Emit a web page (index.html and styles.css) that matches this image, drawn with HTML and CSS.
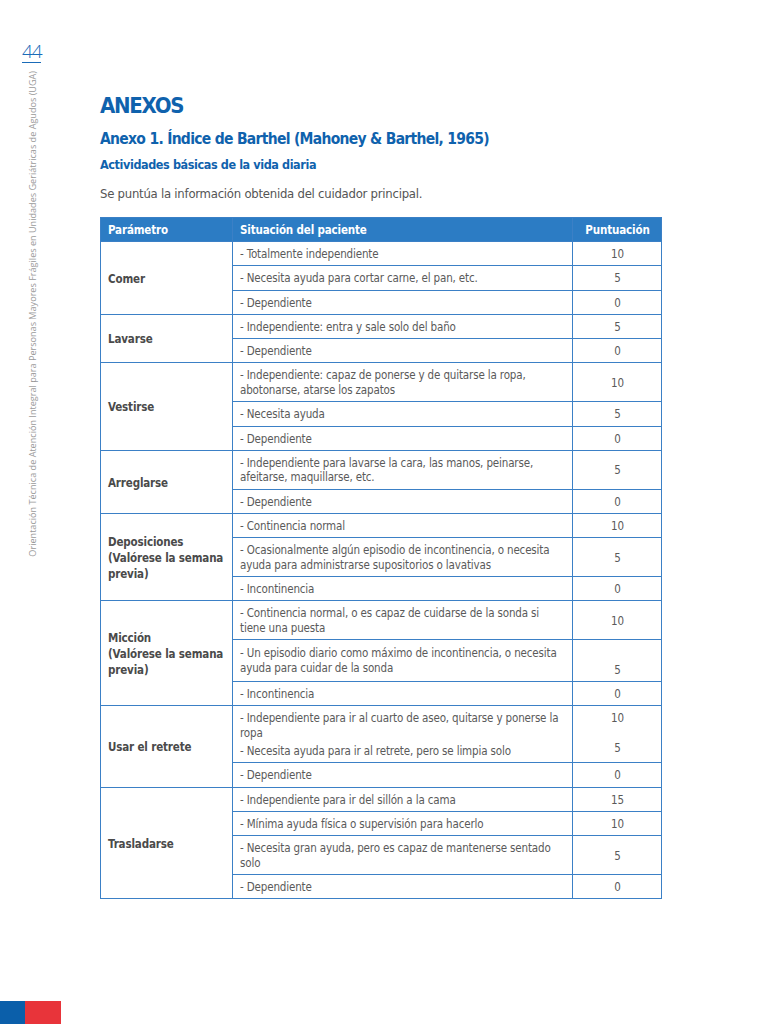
FILE: index.html
```html
<!DOCTYPE html>
<html lang="es">
<head>
<meta charset="utf-8">
<title>Anexos</title>
<link rel="stylesheet" href="styles.css">
</head>
<body>
<div class="page">
  <aside class="side">
    <div class="pagenum">44</div>
    <div class="vtext">Orientación Técnica de Atención Integral para Personas Mayores Frágiles en Unidades Geriátricas de Agudos (UGA)</div>
  </aside>
  <main class="content">
    <h1 class="h1">ANEXOS</h1>
    <h2 class="h2">Anexo 1. Índice de Barthel (Mahoney &amp; Barthel, 1965)</h2>
    <h3 class="h3">Actividades básicas de la vida diaria</h3>
    <p class="intro">Se puntúa la información obtenida del cuidador principal.</p>
    <table class="tbl">
      <colgroup><col class="c1"><col class="c2"><col class="c3"></colgroup>
      <thead>
        <tr><th>Parámetro</th><th>Situación del paciente</th><th class="num">Puntuación</th></tr>
      </thead>
      <tbody>
        <tr><td class="param" rowspan="3">Comer</td><td>- Totalmente independiente</td><td class="num">10</td></tr>
        <tr><td>- Necesita ayuda para cortar carne, el pan, etc.</td><td class="num">5</td></tr>
        <tr><td>- Dependiente</td><td class="num">0</td></tr>

        <tr><td class="param" rowspan="2">Lavarse</td><td>- Independiente: entra y sale solo del baño</td><td class="num">5</td></tr>
        <tr><td>- Dependiente</td><td class="num">0</td></tr>

        <tr><td class="param" rowspan="3">Vestirse</td><td>- Independiente: capaz de ponerse y de quitarse la ropa, abotonarse, atarse los zapatos</td><td class="num">10</td></tr>
        <tr><td>- Necesita ayuda</td><td class="num">5</td></tr>
        <tr><td>- Dependiente</td><td class="num">0</td></tr>

        <tr><td class="param" rowspan="2">Arreglarse</td><td>- Independiente para lavarse la cara, las manos, peinarse, afeitarse, maquillarse, etc.</td><td class="num">5</td></tr>
        <tr><td>- Dependiente</td><td class="num">0</td></tr>

        <tr><td class="param" rowspan="3">Deposiciones<br>(Valórese la semana previa)</td><td>- Continencia normal</td><td class="num">10</td></tr>
        <tr><td>- Ocasionalmente algún episodio de incontinencia, o necesita ayuda para administrarse supositorios o lavativas</td><td class="num">5</td></tr>
        <tr><td>- Incontinencia</td><td class="num">0</td></tr>

        <tr><td class="param" rowspan="3">Micción<br>(Valórese la semana previa)</td><td>- Continencia normal, o es capaz de cuidarse de la sonda si tiene una puesta</td><td class="num">10</td></tr>
        <tr><td class="top tall">- Un episodio diario como máximo de incontinencia, o necesita ayuda para cuidar de la sonda</td><td class="num bottom">5</td></tr>
        <tr><td>- Incontinencia</td><td class="num">0</td></tr>

        <tr><td class="param" rowspan="2">Usar el retrete</td>
          <td class="multi"><div class="item">- Independiente para ir al cuarto de aseo, quitarse y ponerse la ropa</div><div class="item">- Necesita ayuda para ir al retrete, pero se limpia solo</div></td>
          <td class="num multi"><div class="score first">10</div><div class="score">5</div></td></tr>
        <tr><td>- Dependiente</td><td class="num">0</td></tr>

        <tr><td class="param" rowspan="4">Trasladarse</td><td>- Independiente para ir del sillón a la cama</td><td class="num">15</td></tr>
        <tr><td>- Mínima ayuda física o supervisión para hacerlo</td><td class="num">10</td></tr>
        <tr><td>- Necesita gran ayuda, pero es capaz de mantenerse sentado solo</td><td class="num">5</td></tr>
        <tr><td>- Dependiente</td><td class="num">0</td></tr>
      </tbody>
    </table>
  </main>
</div>
<div class="flag"><span class="flag-blue"></span><span class="flag-red"></span></div>
</body>
</html>
```

FILE: styles.css
```css
html, body {
  margin: 0;
  padding: 0;
  background: #ffffff;
}
body {
  font-family: "DejaVu Sans Condensed", "Liberation Sans", sans-serif;
  color: #555;
}
.page {
  display: flex;
  height: 1001px;
}
.side {
  width: 100px;
  flex: none;
  padding-left: 22px;
  box-sizing: border-box;
  display: flex;
  flex-direction: column;
}
.pagenum {
  margin-top: 40px;
  width: 19px;
  font-family: "Open Sans", sans-serif;
  font-weight: 300;
  font-size: 19px;
  line-height: 22px;
  color: #1a6bb8;
  border-bottom: 1px solid #1a6bb8;
  padding-bottom: 0;
  letter-spacing: -1px;
  white-space: nowrap;
}
.vtext {
  margin-top: 8px;
  margin-left: 5px;
  writing-mode: vertical-rl;
  transform: rotate(180deg);
  font-family: "Open Sans", sans-serif;
  font-size: 9.1px;
  line-height: 11px;
  color: #9a9a9a;
  white-space: nowrap;
  align-self: flex-start;
}
.content {
  flex: none;
  width: 561px;
  padding-top: 92px;
}
.h1 {
  margin: 0;
  font-size: 22px;
  line-height: 28px;
  font-weight: bold;
  color: #0f62ad;
  letter-spacing: -1.3px;
}
.h2 {
  margin: 8px 0 0;
  font-size: 15.5px;
  line-height: 22px;
  font-weight: bold;
  color: #0f62ad;
  letter-spacing: -0.7px;
}
.h3 {
  margin: 6px 0 0;
  font-size: 12.5px;
  line-height: 18px;
  font-weight: bold;
  color: #0f62ad;
  letter-spacing: -0.4px;
}
.intro {
  margin: 11px 0 0;
  font-size: 13px;
  line-height: 18px;
  color: #555;
  letter-spacing: -0.25px;
}
.tbl {
  margin-top: 14px;
  width: 561px;
  border-collapse: collapse;
  table-layout: fixed;
  font-size: 11.5px;
  line-height: 14.5px;
  letter-spacing: -0.15px;
}
.c1 { width: 132px; }
.c2 { width: 340px; }
.c3 { width: 89px; }
.tbl th, .tbl td {
  border: 1px solid #3b80c6;
  padding: 5px 6px 3.8px 7px;
  vertical-align: middle;
  text-align: left;
}
.tbl th {
  background: #2c7cc4;
  color: #fff;
  font-weight: bold;
  line-height: 14px;
  padding-top: 5px;
  padding-bottom: 4px;
}
.tbl th.num, .tbl td.num {
  text-align: center;
}
.tbl td {
  color: #5a5a5a;
}
.tbl td.param {
  font-weight: bold;
  color: #4a4a4a;
  line-height: 16px;
}
.tbl td.top {
  vertical-align: top;
}
.tbl td.tall {
  padding-top: 6px;
  padding-bottom: 6px;
}
.tbl td.bottom {
  vertical-align: bottom;
  padding-bottom: 4px;
}
.tbl td.multi {
  vertical-align: top;
  padding-top: 5px;
  padding-bottom: 4px;
}
.item + .item {
  margin-top: 3.5px;
}
.score.first {
  height: 30px;
}
.flag {
  display: flex;
  height: 23px;
}
.flag-blue {
  width: 25px;
  background: #0b5faa;
}
.flag-red {
  width: 36px;
  background: #e8343a;
}
```
